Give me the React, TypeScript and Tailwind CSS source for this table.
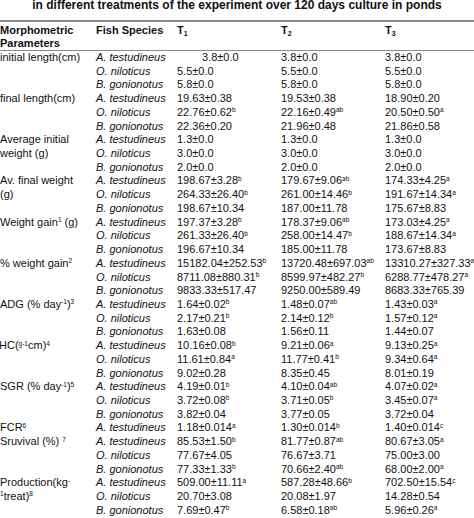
import React from "react";

type Cell = { v: string; s?: string };
type Row = { label?: React.ReactNode; fish: string; t: [Cell, Cell, Cell]; indent?: boolean };

const c = (v: string, s?: string): Cell => ({ v, s });

const A = "A. testudineus";
const O = "O. niloticus";
const B = "B. gonionotus";

const Sup = ({ children }: { children: React.ReactNode }) => (
  <sup className="text-[6.5px] -top-[0.55em]">{children}</sup>
);

const rows: Row[] = [
  { label: "initial length(cm)", fish: A, t: [c("3.8±0.0"), c("3.8±0.0"), c("3.8±0.0")], indent: true },
  { fish: O, t: [c("5.5±0.0"), c("5.5±0.0"), c("5.5±0.0")] },
  { fish: B, t: [c("5.8±0.0"), c("5.8±0.0"), c("5.8±0.0")] },
  { label: "final length(cm)", fish: A, t: [c("19.63±0.38"), c("19.53±0.38"), c("18.90±0.20")] },
  { fish: O, t: [c("22.76±0.62", "b"), c("22.16±0.49", "ab"), c("20.50±0.50", "a")] },
  { fish: B, t: [c("22.36±0.20"), c("21.96±0.48"), c("21.86±0.58")] },
  { label: "Average initial", fish: A, t: [c("1.3±0.0"), c("1.3±0.0"), c("1.3±0.0")] },
  { label: "weight (g)", fish: O, t: [c("3.0±0.0"), c("3.0±0.0"), c("3.0±0.0")] },
  { fish: B, t: [c("2.0±0.0"), c("2.0±0.0"), c("2.0±0.0")] },
  { label: "Av. final weight", fish: A, t: [c("198.67±3.28", "b"), c("179.67±9.06", "ab"), c("174.33±4.25", "a")] },
  { label: "(g)", fish: O, t: [c("264.33±26.40", "b"), c("261.00±14.46", "b"), c("191.67±14.34", "a")] },
  { fish: B, t: [c("198.67±10.34"), c("187.00±11.78"), c("175.67±8.83")] },
  {
    label: (
      <>
        Weight gain<Sup>1</Sup> (g)
      </>
    ),
    fish: A,
    t: [c("197.37±3.28", "b"), c("178.37±9.06", "ab"), c("173.03±4.25", "a")],
  },
  { fish: O, t: [c("261.33±26.40", "b"), c("258.00±14.47", "b"), c("188.67±14.34", "a")] },
  { fish: B, t: [c("196.67±10.34"), c("185.00±11.78"), c("173.67±8.83")] },
  {
    label: (
      <>
        % weight gain<Sup>2</Sup>
      </>
    ),
    fish: A,
    t: [c("15182.04±252.53", "b"), c("13720.48±697.03", "ab"), c("13310.27±327.33", "a")],
  },
  { fish: O, t: [c("8711.08±880.31", "b"), c("8599.97±482.27", "b"), c("6288.77±478.27", "a")] },
  { fish: B, t: [c("9833.33±517.47"), c("9250.00±589.49"), c("8683.33±765.39")] },
  {
    label: (
      <>
        ADG (% day<Sup>-1</Sup>)<Sup>3</Sup>
      </>
    ),
    fish: A,
    t: [c("1.64±0.02", "b"), c("1.48±0.07", "ab"), c("1.43±0.03", "a")],
  },
  { fish: O, t: [c("2.17±0.21", "b"), c("2.14±0.12", "b"), c("1.57±0.12", "a")] },
  { fish: B, t: [c("1.63±0.08"), c("1.56±0.11"), c("1.44±0.07")] },
  {
    label: (
      <span className="-ml-[1px]">
        HC(<Sup>g-1</Sup>cm)<Sup>4</Sup>
      </span>
    ),
    fish: A,
    t: [c("10.16±0.08", "b"), c("9.21±0.06", "a"), c("9.13±0.25", "a")],
  },
  { fish: O, t: [c("11.61±0.84", "a"), c("11.77±0.41", "b"), c("9.34±0.64", "a")] },
  { fish: B, t: [c("9.02±0.28"), c("8.35±0.45"), c("8.01±0.19")] },
  {
    label: (
      <>
        SGR (% day<Sup>-1</Sup>)<Sup>5</Sup>
      </>
    ),
    fish: A,
    t: [c("4.19±0.01", "b"), c("4.10±0.04", "ab"), c("4.07±0.02", "a")],
  },
  { fish: O, t: [c("3.72±0.08", "b"), c("3.71±0.05", "b"), c("3.45±0.07", "a")] },
  { fish: B, t: [c("3.82±0.04"), c("3.77±0.05"), c("3.72±0.04")] },
  {
    label: (
      <>
        FCR<Sup>6</Sup>
      </>
    ),
    fish: A,
    t: [c("1.18±0.014", "a"), c("1.30±0.014", "b"), c("1.40±0.014", "c")],
  },
  {
    label: (
      <>
        Sruvival (%) <Sup>7</Sup>
      </>
    ),
    fish: A,
    t: [c("85.53±1.50", "b"), c("81.77±0.87", "ab"), c("80.67±3.05", "a")],
  },
  { fish: O, t: [c("77.67±4.05"), c("76.67±3.71"), c("75.00±3.00")] },
  { fish: B, t: [c("77.33±1.33", "b"), c("70.66±2.40", "ab"), c("68.00±2.00", "a")] },
  {
    label: (
      <>
        Production(kg<Sup>-</Sup>
      </>
    ),
    fish: A,
    t: [c("509.00±11.11", "a"), c("587.28±48.66", "b"), c("702.50±15.54", "c")],
  },
  {
    label: (
      <>
        <Sup>1</Sup>treat)<Sup>8</Sup>
      </>
    ),
    fish: O,
    t: [c("20.70±3.08"), c("20.08±1.97"), c("14.28±0.54")],
  },
  { fish: B, t: [c("7.69±0.47", "b"), c("6.58±0.18", "ab"), c("5.96±0.26", "a")] },
];

const cols = "grid grid-cols-[96px_81px_104px_104px_1fr]";

export default function App() {
  return (
    <div className="w-[474px] h-[518px] overflow-hidden bg-white text-[#111] font-['Liberation_Sans',Arial,sans-serif] text-[11px]">
      <div className="text-center font-bold text-[12px] leading-[14px] -mt-[2px] h-[22px]">
        in different treatments of the experiment over 120 days culture in ponds
      </div>
      <div className="border-t-2 border-[#8a8a8a]" />
      <div className={`${cols} h-[28px] font-bold leading-[13px] pt-[2px]`}>
        <div>
          Morphometric
          <br />
          Parameters
        </div>
        <div>Fish Species</div>
        <div>
          T<sub className="text-[7px]">1</sub>
        </div>
        <div>
          T<sub className="text-[7px]">2</sub>
        </div>
        <div>
          T<sub className="text-[7px]">3</sub>
        </div>
      </div>
      <div className="border-t border-[#8a8a8a]" />
      {rows.map((r, i) => (
        <div key={i} className={`${cols} h-[13.73px] leading-[13.73px] whitespace-nowrap`}>
          <div>{r.label}</div>
          <div className="italic">{r.fish}</div>
          {r.t.map((cell, j) => (
            <div key={j} className={r.indent && j === 0 ? "pl-[25px]" : ""}>
              {cell.v}
              {cell.s && <Sup>{cell.s}</Sup>}
            </div>
          ))}
        </div>
      ))}
    </div>
  );
}
